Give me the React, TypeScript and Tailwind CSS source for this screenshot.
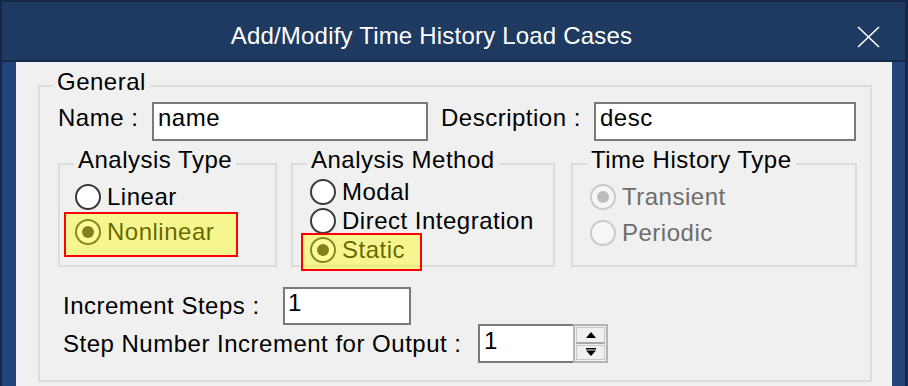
import React from 'react';

const Radio: React.FC<{ checked?: boolean; disabled?: boolean }> = ({ checked, disabled }) => {
  const ring = disabled
    ? 'w-[26px] h-[26px] rounded-full border-2 border-[#cacaca] bg-[#f6f6f6] flex items-center justify-center shrink-0'
    : 'w-[26px] h-[26px] rounded-full border-2 border-[#3a3a3a] bg-white flex items-center justify-center shrink-0';
  return (
    <span className={ring}>
      {checked && (
        <span
          className={
            disabled
              ? 'w-[12px] h-[12px] rounded-full bg-[#bdbdbd]'
              : 'w-[12px] h-[12px] rounded-full bg-[#303030]'
          }
        />
      )}
    </span>
  );
};

const RadioRow: React.FC<{
  label: string;
  checked?: boolean;
  disabled?: boolean;
  children?: React.ReactNode;
}> = ({ label, checked, disabled, children }) => (
  <div className="relative flex items-center gap-[6px] h-[28px]">
    <Radio checked={checked} disabled={disabled} />
    <span className={disabled ? 'text-[#6d6d6d] leading-[28px]' : 'text-black leading-[28px]'}>{label}</span>
    {children}
  </div>
);

const GroupBox: React.FC<{ title: string; className: string; children?: React.ReactNode }> = ({
  title,
  className,
  children,
}) => (
  <div className={className}>
    <div className="-mt-[19px] ml-[14px] flex">
      <span className="px-[4px] bg-[#f0f0f0] leading-[28px]">{title}</span>
    </div>
    {children}
  </div>
);

export default function App() {
  return (
    <div className="w-[908px] h-[386px] overflow-hidden bg-[#16284a] pt-[2px] pl-[2px] pr-[3px] flex flex-col font-['Liberation_Sans',Arial,sans-serif] text-[24px] tracking-[0.5px] text-black">
      {/* title bar */}
      <div className="h-[58px] shrink-0 bg-[#1f3a60] flex items-start pt-[20px]">
        <span className="flex-1 text-center pl-[4px] text-white leading-[28px] tracking-[0.2px]">
          Add/Modify Time History Load Cases
        </span>
        <svg className="w-[23px] h-[22px] mt-[4px] mr-[25px]" viewBox="0 0 23 22">
          <path d="M1 1 L22 21 M22 1 L1 21" stroke="white" strokeWidth="1.6" fill="none" />
        </svg>
      </div>

      <div className="flex flex-1 mt-[2px] min-h-0">
        <div className="w-[14px] bg-[#22467a]" />
        <div className="flex-1 bg-[#f0f0f0]">
          {/* General */}
          <div className="ml-[22px] mt-[23px] w-[834px] h-[297px] border-2 border-[#dcdcdc]">
            <div className="-mt-[19px] ml-[13px] flex">
              <span className="px-[4px] bg-[#f0f0f0] leading-[28px]">General</span>
            </div>

            <div className="mt-[6px] pl-[18px] flex items-start">
              <span className="w-[94px] mt-[2px] leading-[28px]">Name :</span>
              <div className="w-[276px] h-[39px] border-2 border-[#7a7a7a] bg-white pl-[4px] leading-[28px]">
                name
              </div>
              <span className="ml-[13px] w-[153px] mt-[2px] leading-[28px]">Description :</span>
              <div className="w-[262px] h-[39px] border-2 border-[#7a7a7a] bg-white pl-[4px] leading-[28px]">
                desc
              </div>
            </div>

            <div className="mt-[22px] pl-[18px] flex">
              <GroupBox title="Analysis Type" className="w-[219px] h-[104px] border-2 border-[#dcdcdc]">
                <div className="mt-[9px] pl-[15px] flex flex-col gap-[7px]">
                  <RadioRow label="Linear" />
                  <RadioRow label="Nonlinear" checked>
                    <div className="absolute left-[-11px] top-[-6px] w-[174px] h-[45px] border-2 border-[#ff0000] bg-[#ffff00]/40" />
                  </RadioRow>
                </div>
              </GroupBox>

              <GroupBox title="Analysis Method" className="ml-[14px] w-[264px] h-[104px] border-2 border-[#dcdcdc]">
                <div className="mt-[4px] pl-[17px] flex flex-col gap-[1px]">
                  <RadioRow label="Modal" />
                  <RadioRow label="Direct Integration" />
                  <RadioRow label="Static" checked>
                    <div className="absolute left-[-9px] top-[-3px] w-[121px] h-[38px] border-2 border-[#ff0000] bg-[#ffff00]/40" />
                  </RadioRow>
                </div>
              </GroupBox>

              <GroupBox title="Time History Type" className="ml-[16px] w-[286px] h-[104px] border-2 border-[#dcdcdc]">
                <div className="mt-[9px] pl-[17px] flex flex-col gap-[8px]">
                  <RadioRow label="Transient" checked disabled />
                  <RadioRow label="Periodic" disabled />
                </div>
              </GroupBox>
            </div>

            <div className="mt-[20px] pl-[23px] flex items-center h-[38px]">
              <span className="w-[220px] leading-[28px]">Increment Steps :</span>
              <div className="w-[128px] h-[38px] border-2 border-[#7a7a7a] bg-white pl-[3px] leading-[28px]">1</div>
            </div>

            <div className="-mt-[1px] pl-[23px] flex items-center h-[39px]">
              <span className="w-[415px] leading-[28px]">Step Number Increment for Output :</span>
              <div className="flex h-[39px]">
                <div className="w-[95px] border-2 border-r-0 border-[#7a7a7a] bg-white pl-[4px] pt-[1px] leading-[28px]">
                  1
                </div>
                <div className="w-[35px] border-2 border-[#b4b4b4] bg-[#f0f0f0] flex flex-col p-[1px] gap-[1px]">
                  <div className="flex-1 border border-[#c8c8c8] border-b-2 border-b-[#a8a8a8] flex items-center justify-center">
                    <svg className="w-[10px] h-[6px]" viewBox="0 0 10 6">
                      <polygon points="5,0 10,6 0,6" fill="black" />
                    </svg>
                  </div>
                  <div className="flex-1 border border-[#c8c8c8] flex flex-col items-center justify-center">
                    <svg className="w-[10px] h-[8px]" viewBox="0 0 10 8">
                      <rect x="0" y="0" width="10" height="1.5" fill="black" />
                      <polygon points="0,2.5 10,2.5 5,8" fill="black" />
                    </svg>
                  </div>
                </div>
              </div>
            </div>
          </div>
        </div>
        <div className="w-[13px] bg-[#22467a]" />
      </div>
    </div>
  );
}
